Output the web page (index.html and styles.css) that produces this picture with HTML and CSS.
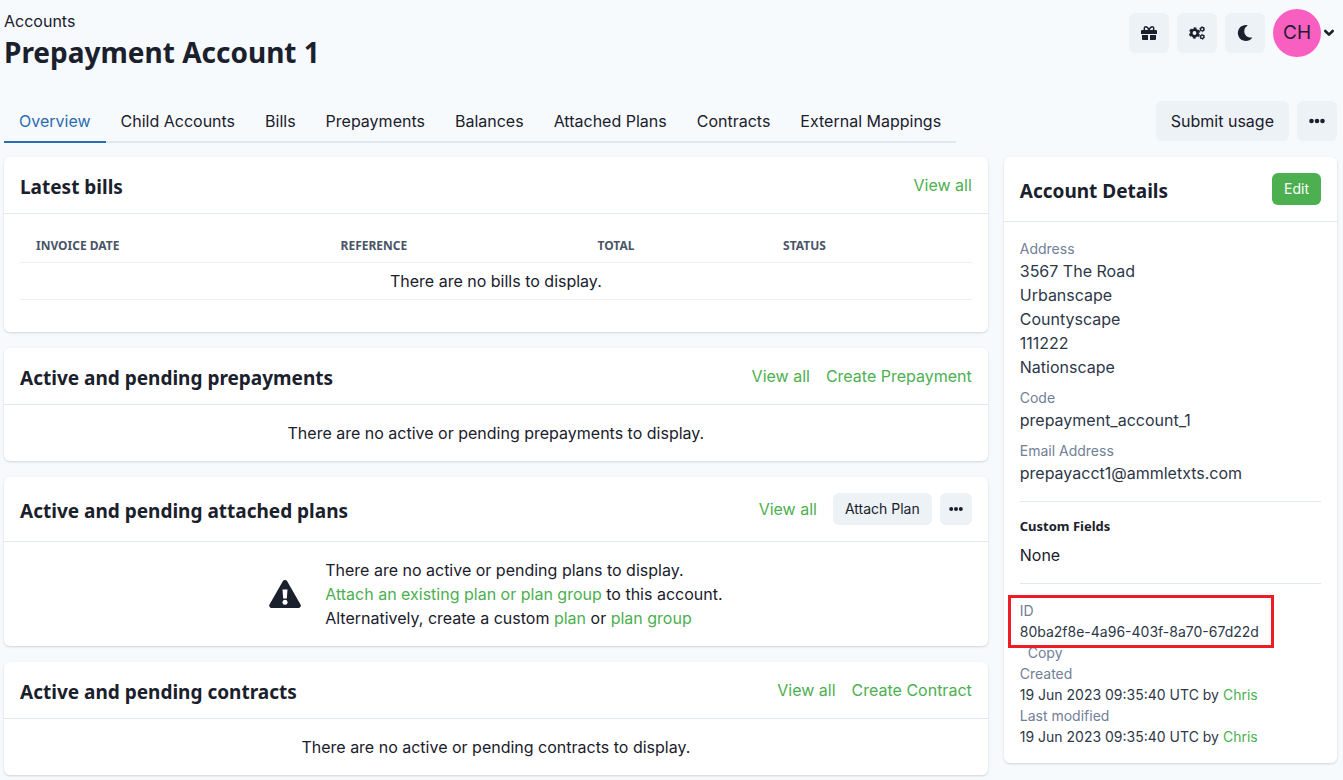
FILE: index.html
```html
<!DOCTYPE html>
<html lang="en">
<head>
    <meta charset="UTF-8">
    <meta name="viewport" content="width=device-width, initial-scale=1.0">
    <title>Prepayment Account 1</title>
    <link rel="stylesheet" href="styles.css">
</head>
<body>
    <header class="page-header">
        <div class="page-title">
            <a class="breadcrumb" href="#">Accounts</a>
            <h1>Prepayment Account 1</h1>
        </div>
        <div class="toolbar">
            <button class="btn btn-icon" aria-label="What's new">
                <svg width="16" height="16" viewBox="0 0 16 16" fill="currentColor">
                    <path d="M1 5h14a1 1 0 0 1 1 1v3H0V6a1 1 0 0 1 1-1z"/>
                    <path d="M1 10h6v5H2a1 1 0 0 1-1-1zM9 10h6v4a1 1 0 0 1-1 1H9z"/>
                    <path d="M8 5C7 2.800 5.900 1.700 4.700 1.800 3 1.900 2.900 4 3.800 5M8 5c1-2.200 2.100-3.300 3.300-3.200 1.700.1 1.800 2.200.9 3.200" fill="none" stroke="currentColor" stroke-width="1.500"/>
                </svg>
            </button>
            <button class="btn btn-icon" aria-label="Settings">
                <svg width="16" height="14" viewBox="0 0 16 14" fill="none" stroke="currentColor">
                    <circle cx="5.500" cy="7" r="3.200" stroke-width="2.500"/>
                    <circle cx="5.500" cy="7" r="4.800" stroke-width="1.700" stroke-dasharray="2.700 2.326" stroke-dashoffset="-1.200"/>
                    <circle cx="13.200" cy="3.200" r="1.700" stroke-width="1.400"/>
                    <circle cx="13.200" cy="3.200" r="2.500" stroke-width=".8" stroke-dasharray="1.400 1.218"/>
                    <circle cx="13.200" cy="10.800" r="1.700" stroke-width="1.400"/>
                    <circle cx="13.200" cy="10.800" r="2.500" stroke-width=".8" stroke-dasharray="1.400 1.218"/>
                </svg>
            </button>
            <button class="btn btn-icon" aria-label="Toggle dark mode">
                <svg width="16" height="16" viewBox="0 0 512 512" fill="currentColor">
                    <path d="M283 512c79 0 151-36 199-95 7-9-1-21-12-19-124 24-238-72-238-197 0-72 39-139 102-175 9-5 7-20-4-22A258 258 0 0 0 283 0C142 0 27 115 27 256s115 256 256 256z"/>
                </svg>
            </button>
            <button class="user-menu" aria-label="User menu">
                <span class="avatar">CH</span>
                <svg width="12" height="8" viewBox="0 0 12 8" fill="none" stroke="currentColor" stroke-width="2.600" stroke-linecap="round" stroke-linejoin="round">
                    <path d="M2.300 2L6 5.700 9.700 2"/>
                </svg>
            </button>
        </div>
    </header>

    <div class="nav-row">
        <nav class="tabs">
            <a class="tab active" href="#">Overview</a>
            <a class="tab" href="#">Child Accounts</a>
            <a class="tab" href="#">Bills</a>
            <a class="tab" href="#">Prepayments</a>
            <a class="tab" href="#">Balances</a>
            <a class="tab" href="#">Attached Plans</a>
            <a class="tab" href="#">Contracts</a>
            <a class="tab" href="#">External Mappings</a>
        </nav>
        <div class="actions">
            <button class="btn">Submit usage</button>
            <button class="btn btn-icon" aria-label="More actions">
                <svg width="16" height="6" viewBox="0 0 16 6" fill="currentColor">
                    <circle cx="2.500" cy="3" r="2.300"/><circle cx="8" cy="3" r="2.300"/><circle cx="13.500" cy="3" r="2.300"/>
                </svg>
            </button>
        </div>
    </div>

    <main class="layout">
        <div class="cards">
            <section class="card">
                <div class="card-header">
                    <h2>Latest bills</h2>
                    <div class="card-links"><a href="#">View all</a></div>
                </div>
                <div class="card-body">
                    <table class="bills">
                        <thead>
                            <tr>
                                <th class="col-date">Invoice date</th>
                                <th class="col-reference">Reference</th>
                                <th class="col-total">Total</th>
                                <th>Status</th>
                            </tr>
                        </thead>
                        <tbody>
                            <tr><td colspan="4">There are no bills to display.</td></tr>
                        </tbody>
                    </table>
                </div>
            </section>

            <section class="card">
                <div class="card-header">
                    <h2>Active and pending prepayments</h2>
                    <div class="card-links">
                        <a href="#">View all</a>
                        <a href="#">Create Prepayment</a>
                    </div>
                </div>
                <p class="card-body empty">There are no active or pending prepayments to display.</p>
            </section>

            <section class="card">
                <div class="card-header">
                    <h2>Active and pending attached plans</h2>
                    <div class="card-links">
                        <a href="#">View all</a>
                        <div class="button-group">
                            <button class="btn btn-sm">Attach Plan</button>
                            <button class="btn btn-sm btn-icon" aria-label="More plan actions">
                                <svg width="14" height="6" viewBox="0 0 16 6" fill="currentColor">
                                    <circle cx="2.500" cy="3" r="2.300"/><circle cx="8" cy="3" r="2.300"/><circle cx="13.500" cy="3" r="2.300"/>
                                </svg>
                            </button>
                        </div>
                    </div>
                </div>
                <div class="card-body notice">
                    <svg width="32" height="30" viewBox="0 0 32 30">
                        <path d="M13.800 2.200a2.500 2.500 0 0 1 4.400 0l13.300 23.200a2.400 2.400 0 0 1-2.100 3.600H2.600a2.400 2.400 0 0 1-2.100-3.600z" fill="currentColor"/>
                        <path d="M13.500 10.500h5l-.7 9h-3.600z" fill="#fff"/>
                        <circle cx="16" cy="23.300" r="2.500" fill="#fff"/>
                    </svg>
                    <p>
                        There are no active or pending plans to display.<br>
                        <a href="#">Attach an existing plan or plan group</a> to this account.<br>
                        Alternatively, create a custom <a href="#">plan</a> or <a href="#">plan group</a>
                    </p>
                </div>
            </section>

            <section class="card">
                <div class="card-header">
                    <h2>Active and pending contracts</h2>
                    <div class="card-links">
                        <a href="#">View all</a>
                        <a href="#">Create Contract</a>
                    </div>
                </div>
                <p class="card-body empty">There are no active or pending contracts to display.</p>
            </section>
        </div>

        <aside class="card">
            <div class="card-header">
                <h2>Account Details</h2>
                <button class="btn btn-sm btn-primary">Edit</button>
            </div>
            <div class="card-body">
                <dl class="details">
                    <div>
                        <dt>Address</dt>
                        <dd>3567 The Road<br>Urbanscape<br>Countyscape<br>111222<br>Nationscape</dd>
                    </div>
                    <div>
                        <dt>Code</dt>
                        <dd>prepayment_account_1</dd>
                    </div>
                    <div>
                        <dt>Email Address</dt>
                        <dd>prepayacct1@ammletxts.com</dd>
                    </div>
                </dl>
                <div class="custom-fields">
                    <h3>Custom Fields</h3>
                    <p>None</p>
                </div>
                <dl class="meta">
                    <div class="meta-id">
                        <dt>ID</dt>
                        <dd>80ba2f8e-4a96-403f-8a70-67d22d</dd>
                    </div>
                    <button class="copy">Copy</button>
                    <dt>Created</dt>
                    <dd>19 Jun 2023 09:35:40 UTC by <a href="#">Chris</a></dd>
                    <dt>Last modified</dt>
                    <dd>19 Jun 2023 09:35:40 UTC by <a href="#">Chris</a></dd>
                </dl>
            </div>
        </aside>
    </main>
</body>
</html>
```
FILE: styles.css
```css
*,
*::after {
    box-sizing: border-box;
    margin: 0;
    padding: 0;
}
body {
    font-family: Inter, "Liberation Sans", sans-serif;
    font-size: 16px;
    line-height: 24px;
    color: #1a202c;
    background-color: #f7fafd;
    padding: 9px 6px 5px 4px;
}
h1, h2, h3, th {
    font-family: "Noto Sans", "Open Sans", sans-serif;
    font-weight: 700;
}
h1 {
    font-size: 28px;
    line-height: 34px;
    padding-top: 2px;
}
h2 {
    font-size: 19px;
    line-height: 20px;
    padding-top: 4px;
}
h3 {
    font-size: 13px;
    line-height: 17px;
    margin-bottom: 8px;
}
a {
    color: #4caf50;
    text-decoration: none;
}
svg {
    display: block;
    flex-shrink: 0;
}
button {
    font: inherit;
    color: inherit;
    border: none;
    background: none;
    cursor: pointer;
}

/* Header */
.page-header {
    display: flex;
    justify-content: space-between;
    align-items: flex-start;
    margin-bottom: 32px;
}
.breadcrumb {
    display: block;
    color: inherit;
}
.toolbar {
    display: flex;
    align-items: center;
    gap: 8px;
}
.user-menu {
    display: flex;
    align-items: center;
    gap: 2px;
    padding-right: 2px;
}
.avatar {
    width: 48px;
    height: 48px;
    line-height: 48px;
    border-radius: 50%;
    background-color: #f95fc0;
    font-size: 19px;
    text-align: center;
}

/* Buttons */
.btn {
    display: flex;
    align-items: center;
    justify-content: center;
    height: 40px;
    padding: 0 15px;
    border-radius: 6px;
    background-color: #edf2f7;
}
.btn-icon {
    width: 40px;
    padding: 0;
}
.btn-sm {
    height: 32px;
    padding: 0 12px;
    font-size: 14px;
}
.btn-sm.btn-icon {
    width: 32px;
    padding: 0;
}
.btn-primary {
    background-color: #4caf50;
    color: #fff;
}

/* Tabs */
.nav-row {
    display: flex;
    justify-content: space-between;
    align-items: flex-start;
    margin-bottom: 14px;
}
.tabs {
    display: flex;
    border-bottom: 2px solid #e2e8f0;
}
.tab {
    padding: 8px 15px;
    margin-bottom: -2px;
    border-bottom: 2px solid transparent;
    color: inherit;
}
.tab.active {
    color: #2b6cb0;
    border-color: #2b6cb0;
}
.actions,
.button-group {
    display: flex;
    gap: 8px;
}

/* Cards */
.layout {
    display: grid;
    grid-template-columns: minmax(0, 1fr) 25%;
    gap: 16px;
    align-items: start;
}
.cards {
    display: flex;
    flex-direction: column;
    gap: 16px;
}
.card {
    background-color: #fff;
    border-radius: 6px;
    box-shadow: 0 1px 3px rgba(0, 0, 0, 0.1), 0 1px 2px rgba(0, 0, 0, 0.06);
}
.card-header {
    display: flex;
    align-items: center;
    justify-content: space-between;
    padding: 16px;
    border-bottom: 1px solid #e2e8f0;
}
.card-body {
    padding: 16px;
}
.card-links {
    display: flex;
    align-items: center;
    gap: 16px;
}
.empty {
    text-align: center;
}
.notice {
    display: flex;
    align-items: center;
    justify-content: center;
    gap: 24px;
}

.bills {
    width: 100%;
    table-layout: fixed;
    border-collapse: separate;
    border-spacing: 0;
    margin-bottom: 16px;
}
.bills th {
    padding: 8px 16px;
    border-bottom: 1px solid #edf2f7;
    color: #4a5568;
    font-size: 12px;
    line-height: 16px;
    text-align: left;
    text-transform: uppercase;
}
.bills td {
    padding: 6px 16px;
    border-bottom: 1px solid #edf2f7;
    text-align: center;
}
.col-date {
    width: 32%;
}
.col-reference {
    width: 27%;
}
.col-total {
    width: 19.5%;
}

/* Account details */
.details {
    display: flex;
    flex-direction: column;
    gap: 8px;
    color: #2d3748;
}
dt {
    color: #718096;
    font-size: 14px;
    line-height: 21px;
}
.custom-fields {
    margin: 16px 0;
    padding: 16px 0;
    border-top: 1px solid #e2e8f0;
    border-bottom: 1px solid #e2e8f0;
}
.meta {
    color: #2d3748;
    font-size: 14px;
    line-height: 21px;
}
.meta-id {
    position: relative;
}
/* Highlight frame round the ID */
.meta-id::after {
    content: "";
    position: absolute;
    top: -5px;
    left: -12px;
    width: 266px;
    height: 53px;
    border: 3px solid #ee1c25;
}
.copy {
    display: block;
    margin-left: 8px;
    color: #718096;
}
```
